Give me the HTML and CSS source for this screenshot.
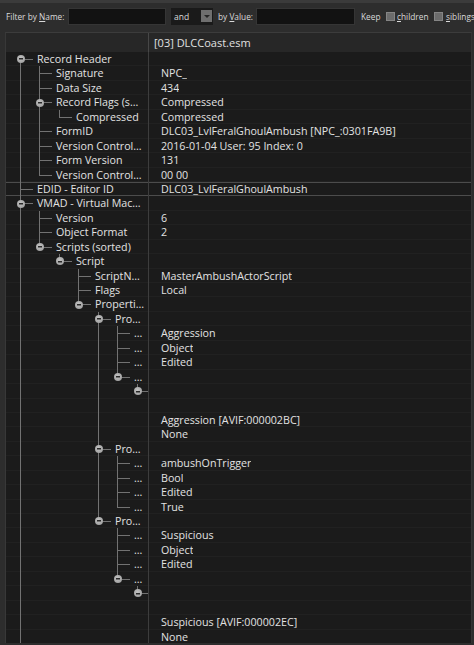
FILE: index.html
```html
<!DOCTYPE html>
<html lang="en">
<head>
<meta charset="utf-8">
<title>xEdit record view</title>
<link rel="stylesheet" href="styles.css">
</head>
<body>
<div class="toolbar">
  <span class="tl tl-name">Filter by <u>N</u>ame:</span>
  <span class="inp inp-name"></span>
  <span class="combo"><span class="combo-txt">and</span><span class="combo-btn"><span class="arrow"></span></span></span>
  <span class="tl tl-val">by <u>V</u>alue:</span>
  <span class="inp inp-val"></span>
  <span class="tl keep">Keep</span>
  <span class="cb"></span><span class="tl cb-lbl"><u>c</u>hildren</span>
  <span class="cb cb2"></span><span class="tl cb-lbl2"><u>s</u>iblings</span>
</div>
<div class="tree">
  <div class="thead"><div class="th-name"></div><div class="th-val">[03] DLCCoast.esm</div></div>

  <div class="row"><div class="name"><span class="g f"><span class="tog"></span></span><span class="lbl">Record Header</span></div><div class="val"></div></div>
  <div class="row"><div class="name"><span class="g v"></span><span class="g t"></span><span class="lbl">Signature</span></div><div class="val">NPC_</div></div>
  <div class="row"><div class="name"><span class="g v"></span><span class="g t"></span><span class="lbl">Data Size</span></div><div class="val">434</div></div>
  <div class="row"><div class="name"><span class="g v"></span><span class="g t"><span class="tog"></span></span><span class="lbl">Record Flags (s…</span></div><div class="val">Compressed</div></div>
  <div class="row"><div class="name"><span class="g v"></span><span class="g v"></span><span class="g l"></span><span class="lbl">Compressed</span></div><div class="val">Compressed</div></div>
  <div class="row"><div class="name"><span class="g v"></span><span class="g t"></span><span class="lbl">FormID</span></div><div class="val">DLC03_LvlFeralGhoulAmbush [NPC_:0301FA9B]</div></div>
  <div class="row"><div class="name"><span class="g v"></span><span class="g t"></span><span class="lbl">Version Control…</span></div><div class="val">2016-01-04 User: 95 Index: 0</div></div>
  <div class="row"><div class="name"><span class="g v"></span><span class="g t"></span><span class="lbl">Form Version</span></div><div class="val">131</div></div>
  <div class="row"><div class="name"><span class="g v"></span><span class="g l"></span><span class="lbl">Version Control…</span></div><div class="val">00 00</div></div>
  <div class="row focus"><div class="name"><span class="g t"></span><span class="lbl">EDID - Editor ID</span></div><div class="val">DLC03_LvlFeralGhoulAmbush</div></div>
  <div class="row"><div class="name"><span class="g t"><span class="tog"></span></span><span class="lbl">VMAD - Virtual Mac…</span></div><div class="val"></div></div>
  <div class="row"><div class="name"><span class="g v"></span><span class="g t"></span><span class="lbl">Version</span></div><div class="val">6</div></div>
  <div class="row"><div class="name"><span class="g v"></span><span class="g t"></span><span class="lbl">Object Format</span></div><div class="val">2</div></div>
  <div class="row"><div class="name"><span class="g v"></span><span class="g l"><span class="tog"></span></span><span class="lbl">Scripts (sorted)</span></div><div class="val"></div></div>
  <div class="row"><div class="name"><span class="g v"></span><span class="g"></span><span class="g l"><span class="tog"></span></span><span class="lbl">Script</span></div><div class="val"></div></div>
  <div class="row"><div class="name"><span class="g v"></span><span class="g"></span><span class="g"></span><span class="g t"></span><span class="lbl">ScriptN…</span></div><div class="val">MasterAmbushActorScript</div></div>
  <div class="row"><div class="name"><span class="g v"></span><span class="g"></span><span class="g"></span><span class="g t"></span><span class="lbl">Flags</span></div><div class="val">Local</div></div>
  <div class="row"><div class="name"><span class="g v"></span><span class="g"></span><span class="g"></span><span class="g l"><span class="tog"></span></span><span class="lbl">Properti…</span></div><div class="val"></div></div>

  <div class="row"><div class="name"><span class="g v"></span><span class="g"></span><span class="g"></span><span class="g"></span><span class="g t"><span class="tog"></span></span><span class="lbl">Pro…</span></div><div class="val"></div></div>
  <div class="row"><div class="name"><span class="g v"></span><span class="g"></span><span class="g"></span><span class="g"></span><span class="g v"></span><span class="g t"></span><span class="lbl">…</span></div><div class="val">Aggression</div></div>
  <div class="row"><div class="name"><span class="g v"></span><span class="g"></span><span class="g"></span><span class="g"></span><span class="g v"></span><span class="g t"></span><span class="lbl">…</span></div><div class="val">Object</div></div>
  <div class="row"><div class="name"><span class="g v"></span><span class="g"></span><span class="g"></span><span class="g"></span><span class="g v"></span><span class="g t"></span><span class="lbl">…</span></div><div class="val">Edited</div></div>
  <div class="row"><div class="name"><span class="g v"></span><span class="g"></span><span class="g"></span><span class="g"></span><span class="g v"></span><span class="g l"><span class="tog"></span></span><span class="lbl">…</span></div><div class="val"></div></div>
  <div class="row"><div class="name"><span class="g v"></span><span class="g"></span><span class="g"></span><span class="g"></span><span class="g v"></span><span class="g"></span><span class="g l"><span class="tog"></span></span><span class="lbl"></span></div><div class="val"></div></div>
  <div class="row"><div class="name"><span class="g v"></span><span class="g"></span><span class="g"></span><span class="g"></span><span class="g v"></span><span class="g"></span><span class="g"></span><span class="g t"></span></div><div class="val"></div></div>
  <div class="row"><div class="name"><span class="g v"></span><span class="g"></span><span class="g"></span><span class="g"></span><span class="g v"></span><span class="g"></span><span class="g"></span><span class="g t"></span></div><div class="val">Aggression [AVIF:000002BC]</div></div>
  <div class="row"><div class="name"><span class="g v"></span><span class="g"></span><span class="g"></span><span class="g"></span><span class="g v"></span><span class="g"></span><span class="g"></span><span class="g l"></span></div><div class="val">None</div></div>

  <div class="row"><div class="name"><span class="g v"></span><span class="g"></span><span class="g"></span><span class="g"></span><span class="g t"><span class="tog"></span></span><span class="lbl">Pro…</span></div><div class="val"></div></div>
  <div class="row"><div class="name"><span class="g v"></span><span class="g"></span><span class="g"></span><span class="g"></span><span class="g v"></span><span class="g t"></span><span class="lbl">…</span></div><div class="val">ambushOnTrigger</div></div>
  <div class="row"><div class="name"><span class="g v"></span><span class="g"></span><span class="g"></span><span class="g"></span><span class="g v"></span><span class="g t"></span><span class="lbl">…</span></div><div class="val">Bool</div></div>
  <div class="row"><div class="name"><span class="g v"></span><span class="g"></span><span class="g"></span><span class="g"></span><span class="g v"></span><span class="g t"></span><span class="lbl">…</span></div><div class="val">Edited</div></div>
  <div class="row"><div class="name"><span class="g v"></span><span class="g"></span><span class="g"></span><span class="g"></span><span class="g v"></span><span class="g l"></span><span class="lbl">…</span></div><div class="val">True</div></div>

  <div class="row"><div class="name"><span class="g v"></span><span class="g"></span><span class="g"></span><span class="g"></span><span class="g l"><span class="tog"></span></span><span class="lbl">Pro…</span></div><div class="val"></div></div>
  <div class="row"><div class="name"><span class="g v"></span><span class="g"></span><span class="g"></span><span class="g"></span><span class="g"></span><span class="g t"></span><span class="lbl">…</span></div><div class="val">Suspicious</div></div>
  <div class="row"><div class="name"><span class="g v"></span><span class="g"></span><span class="g"></span><span class="g"></span><span class="g"></span><span class="g t"></span><span class="lbl">…</span></div><div class="val">Object</div></div>
  <div class="row"><div class="name"><span class="g v"></span><span class="g"></span><span class="g"></span><span class="g"></span><span class="g"></span><span class="g t"></span><span class="lbl">…</span></div><div class="val">Edited</div></div>
  <div class="row"><div class="name"><span class="g v"></span><span class="g"></span><span class="g"></span><span class="g"></span><span class="g"></span><span class="g l"><span class="tog"></span></span><span class="lbl">…</span></div><div class="val"></div></div>
  <div class="row"><div class="name"><span class="g v"></span><span class="g"></span><span class="g"></span><span class="g"></span><span class="g"></span><span class="g"></span><span class="g l"><span class="tog"></span></span><span class="lbl"></span></div><div class="val"></div></div>
  <div class="row"><div class="name"><span class="g v"></span><span class="g"></span><span class="g"></span><span class="g"></span><span class="g"></span><span class="g"></span><span class="g"></span><span class="g t"></span></div><div class="val"></div></div>
  <div class="row"><div class="name"><span class="g v"></span><span class="g"></span><span class="g"></span><span class="g"></span><span class="g"></span><span class="g"></span><span class="g"></span><span class="g t"></span></div><div class="val">Suspicious [AVIF:000002EC]</div></div>
  <div class="row"><div class="name"><span class="g v"></span><span class="g"></span><span class="g"></span><span class="g"></span><span class="g"></span><span class="g"></span><span class="g"></span><span class="g l"></span></div><div class="val">None</div></div>
</div>
</body>
</html>
```

FILE: styles.css
```css
* { box-sizing: border-box; }

html, body {
  margin: 0;
  padding: 0;
}

body {
  width: 474px;
  height: 645px;
  overflow: hidden;
  background: #2d2d2d;
  color: #e2e2e2;
  font-family: "Open Sans", "Noto Sans", sans-serif;
  --lc: #727272;
}

/* ---------- toolbar ---------- */
.toolbar {
  height: 32px;
  display: flex;
  align-items: center;
  padding-left: 6px;
  font-size: 8.3px;
  white-space: nowrap;
  box-shadow: inset 0 3px #3b3b3b;
}

.tl { flex: none; color: #dadada; }
.tl u { text-underline-offset: 1px; }

.tl-name { width: 62px; }

.inp {
  flex: none;
  height: 17px;
  background: #121212;
  border: 1px solid #353535;
}
.inp-name { width: 98px; }
.inp-val { width: 99px; }

.combo {
  flex: none;
  width: 42px;
  height: 17px;
  margin-left: 5px;
  background: #1a1a1a;
  display: flex;
  align-items: center;
  justify-content: space-between;
  padding: 0 1px 0 3px;
}
.combo-txt { font-size: 8.5px; color: #dadada; }
.combo-btn {
  width: 11px;
  height: 12px;
  background: #6f6f6f;
  display: flex;
  align-items: center;
  justify-content: center;
}
.arrow {
  width: 0;
  height: 0;
  border-left: 3px solid transparent;
  border-right: 3px solid transparent;
  border-top: 3px solid #262626;
}

.tl-val { width: 38px; margin-left: 5px; }

.keep { width: 25px; margin-left: 6px; }

.cb {
  flex: none;
  width: 9px;
  height: 9px;
  background: #6c6c6c;
  border: 1px solid #858585;
}
.cb-lbl { width: 37px; margin-left: 2px; }
.cb2 { margin-left: 0; }
.cb-lbl2 { margin-left: 3px; }

/* ---------- tree ---------- */
.tree {
  height: 611px;
  margin: 0 2px 0 5px;
  background: #1b1b1b;
  border-left: 1px solid #383838;
  border-right: 1px solid #333333;
  border-top: 1px solid #3c3c3c;
  overflow: hidden;
}

.thead {
  height: 19px;
  display: flex;
  background: #272727;
}
.th-name {
  flex: none;
  width: 143px;
  border-right: 1px solid #474747;
}
.th-val {
  padding-left: 5px;
  font-size: 11px;
  line-height: 19px;
  color: #e0e0e0;
}

.row {
  height: 14.44px;
  display: flex;
  font-size: 10.7px;
  line-height: 14.44px;
  background: linear-gradient(to top, #212121 1px, transparent 1px);
}
.row.focus {
  box-shadow: inset 0 1px #4c4c4c, inset 0 -1px #4c4c4c;
  background: none;
}

.name {
  flex: none;
  width: 143px;
  height: 100%;
  display: flex;
  padding-left: 4px;
  overflow: hidden;
  border-right: 1px solid #3d3d3d;
}

.val {
  padding-left: 12px;
  white-space: nowrap;
  overflow: hidden;
}

/* guide cells: alternate 20/19px to follow the 19.5px indent */
.g {
  flex: none;
  width: 20px;
  height: 100%;
  display: flex;
  align-items: center;
  --x: 10px;
}
.g:nth-child(even) {
  width: 19px;
  --x: 9px;
}

.v {
  background: linear-gradient(var(--lc), var(--lc)) var(--x) 0 / 1px 100% no-repeat;
}
.t {
  background:
    linear-gradient(var(--lc), var(--lc)) var(--x) 0 / 1px 100% no-repeat,
    linear-gradient(var(--lc), var(--lc)) right 0 top 7px / calc(100% - var(--x)) 1px no-repeat;
}
.l {
  background:
    linear-gradient(var(--lc), var(--lc)) var(--x) 0 / 1px 7.5px no-repeat,
    linear-gradient(var(--lc), var(--lc)) right 0 top 7px / calc(100% - var(--x)) 1px no-repeat;
}
.f {
  background:
    linear-gradient(var(--lc), var(--lc)) var(--x) 7px / 1px calc(100% - 7px) no-repeat,
    linear-gradient(var(--lc), var(--lc)) right 0 top 7px / calc(100% - var(--x)) 1px no-repeat;
}

.tog {
  flex: none;
  width: 8px;
  height: 8px;
  margin-left: calc(var(--x) - 3.5px);
  border-radius: 50%;
  background:
    linear-gradient(#2a2a2a, #2a2a2a) center / 4px 1.5px no-repeat,
    radial-gradient(circle at 45% 40%, #c4c4c4, #959595);
}

.lbl {
  flex: none;
  padding-left: 7px;
  white-space: nowrap;
  background: linear-gradient(var(--lc), var(--lc)) 0 7px / 3px 1px no-repeat;
}
```
